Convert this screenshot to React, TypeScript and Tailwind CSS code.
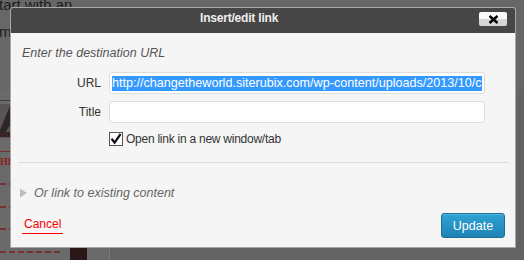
import React from "react";

const font = { fontFamily: '"Liberation Sans", Arial, sans-serif' };

function BackgroundPage() {
  return (
    <div className="flex flex-col text-[#1b1b1b]" style={{ fontFamily: '"Liberation Sans", Arial, sans-serif' }}>
      <div className="-mt-[9px] -ml-[1px] text-[15px] leading-[27px] whitespace-nowrap">
        <div>tart with an</div>
        <div>make sure</div>
      </div>
      <svg width="524" height="170" viewBox="0 0 524 170" className="mt-[45px] block">
        <rect x="0" y="0" width="110" height="170" fill="#6a6a6a" />
        <rect x="110" y="0" width="414" height="170" fill="#636363" />
        <rect x="0" y="10" width="11" height="1" fill="#3e3e3e" />
        <polygon points="0,14 11,14 11,48 0,48" fill="#5a5555" />
        <polygon points="10,16 11,16 11,34 4,44 0,44 0,40" fill="#2c2626" />
        <rect x="0" y="42" width="11" height="5" fill="#3a2323" />
        <rect x="0" y="61" width="11" height="1" fill="#7a2a2a" />
        <text x="0" y="75" fontSize="10" fontWeight="bold" fill="#8c1c1c" fontFamily='"Liberation Serif", serif'>
          HE
        </text>
        <g stroke="#7d1f1f" strokeWidth="1.5" strokeDasharray="6 3">
          <line x1="0" y1="94" x2="60" y2="94" />
          <line x1="0" y1="117" x2="60" y2="117" />
          <line x1="0" y1="139" x2="60" y2="139" />
          <line x1="0" y1="162" x2="60" y2="162" />
        </g>
        <rect x="70" y="158" width="17" height="12" fill="#2a1818" />
        <rect x="109" y="157" width="1" height="13" fill="#7a7a7a" />
      </svg>
    </div>
  );
}

function CloseButton() {
  return (
    <button className="ml-auto mr-[8px] mt-[4px] w-[28px] h-[14px] rounded-[2px] bg-gradient-to-b from-[#fafafa] from-50% to-[#d6d6d6] to-50% flex items-center justify-center">
      <svg width="11" height="9" viewBox="0 0 11 9">
        <path d="M1.5 1 L9.5 8 M9.5 1 L1.5 8" stroke="#000" strokeWidth="2.4" strokeLinecap="butt" />
      </svg>
    </button>
  );
}

function Checkbox() {
  return (
    <svg width="14" height="14" viewBox="0 0 14 14" className="block">
      <rect x="0.5" y="0.5" width="13" height="13" fill="#fdfdfd" stroke="#555" />
      <path d="M2.6 6.8 L5.6 10.6 L11.6 2" stroke="#111" strokeWidth="2.2" fill="none" />
    </svg>
  );
}

export default function App() {
  return (
    <div className="relative w-[524px] h-[260px] overflow-hidden bg-[#676767]" style={font}>
      <BackgroundPage />

      <div className="absolute left-[10px] top-[7px] w-[506px] h-[241px] border border-[#a8a8a8] rounded-t-[3px] bg-[#f5f5f5] flex flex-col">
        <div className="h-[25px] bg-[#464646] flex items-start rounded-t-[2px]">
          <span className="ml-[189px] mt-[2px] text-[12px] leading-[16px] font-bold text-[#eeeeee] tracking-[-0.2px]">
            Insert/edit link
          </span>
          <CloseButton />
        </div>

        <div className="pl-[11px] pr-[10px] flex flex-col">
          <div className="mt-[12px] text-[12.5px] leading-[16px] italic text-[#555]">Enter the destination URL</div>

          <div className="mt-[11px] flex items-center">
            <label className="w-[79px] text-right text-[12px] text-[#333]">URL</label>
            <div className="ml-[8px] w-[376px] h-[22px] bg-white border border-[#dddddd] rounded-[3px] px-[2px] flex items-center">
              <span className="bg-[#3399ff] text-white text-[12.6px] leading-[15px] whitespace-nowrap">
                http://changetheworld.siterubix.com/wp-content/uploads/2013/10/c
              </span>
            </div>
          </div>

          <div className="mt-[7px] flex items-center">
            <label className="w-[79px] text-right text-[12px] text-[#333]">Title</label>
            <div className="ml-[8px] w-[376px] h-[22px] bg-white border border-[#dddddd] rounded-[3px]" />
          </div>

          <div className="mt-[9px] ml-[87px] h-[14px] flex items-center">
            <Checkbox />
            <span className="ml-[3px] text-[12px] leading-[14px] text-[#333] tracking-[-0.25px]">
              Open link in a new window/tab
            </span>
          </div>
        </div>

        <div className="mt-[16px] ml-[7px] mr-[6px] h-px bg-[#dddddd]" />

        <div className="mt-[22px] ml-[9px] flex items-center h-[16px]">
          <svg width="7" height="10" viewBox="0 0 7 10" className="block">
            <polygon points="0,0.5 7,5 0,9.5" fill="#bdbdbd" />
          </svg>
          <span className="ml-[7px] text-[12.5px] leading-[16px] italic text-[#666]">Or link to existing content</span>
        </div>

        <div className="mt-[12px] pl-[11px] pr-[10px] flex items-start justify-between">
          <a className="mt-[3px] px-[2px] text-[12px] leading-[16px] text-[#ff0000] border-b border-[#ff0000] pb-[1px]">
            Cancel
          </a>
          <button className="w-[64px] h-[25px] rounded-[3px] border border-[#1b6f96] bg-gradient-to-b from-[#2fa3d3] to-[#1f82b5] text-white text-[12.5px] leading-[16px] shadow-[inset_0_1px_0_rgba(120,200,230,0.5)]">
            Update
          </button>
        </div>
      </div>
    </div>
  );
}
